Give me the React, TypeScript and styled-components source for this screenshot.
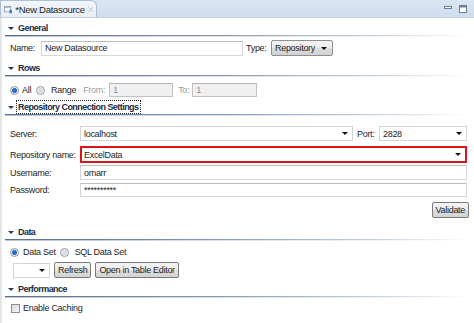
import styled, { createGlobalStyle } from 'styled-components'

const GlobalStyle = createGlobalStyle`
    body {
        margin: 0;
        font-family: 'Liberation Sans', Arial, sans-serif;
        font-size: 9px;
        letter-spacing: -0.3px;
        color: #1e1e1e;
        background: #fff;
    }
`

export default function App() {
    return (
        <>
            <GlobalStyle />
            <Editor>
                <TabBar>
                    <Tab>
                        <svg width="14" height="13" viewBox="0 0 14 13">
                            <rect x="0.5" y="1.5" width="11" height="9" fill="#fff" stroke="#6b7b8c" />
                            <rect x="0.5" y="1.5" width="11" height="2" fill="#8fa6c0" />
                            <rect x="9" y="7" width="5" height="6" rx="1.5" fill="#3d7fd1" />
                        </svg>
                        <span>*New Datasource</span>
                        <svg width="9" height="9" viewBox="0 0 9 9">
                            <path d="M1 1 L8 8 M8 1 L1 8" stroke="#9aa3ad" strokeWidth="1.6" />
                            <path d="M1 1 L8 8 M8 1 L1 8" stroke="#fff" strokeWidth="0.5" />
                        </svg>
                    </Tab>
                    <WindowIcons>
                        <svg width="10" height="8" viewBox="0 0 10 8">
                            <rect x="1.5" y="2.5" width="7" height="2" fill="#fff" stroke="#6f7f91" />
                        </svg>
                        <svg width="10" height="9" viewBox="0 0 10 9">
                            <rect x="1.5" y="1.5" width="7" height="7" fill="#fff" stroke="#6f7f91" />
                            <rect x="1.5" y="1.5" width="7" height="2" fill="#6f7f91" />
                        </svg>
                    </WindowIcons>
                </TabBar>

                <Body>
                    <Section $top={3}>
                        <SectionHeader>
                            <Twistie />
                            <Title>General</Title>
                        </SectionHeader>
                        <Rule />
                        <SectionBody $pad={3}>
                            <Row>
                                <Label $w={31}>Name:</Label>
                                <TextBox $w={202}>New Datasource</TextBox>
                                <Label $w={24} $ml={3}>Type:</Label>
                                <DropButton>
                                    <span>Repository</span>
                                    <Arrow />
                                </DropButton>
                            </Row>
                        </SectionBody>
                    </Section>

                    <Section $top={5}>
                        <SectionHeader>
                            <Twistie />
                            <Title>Rows</Title>
                        </SectionHeader>
                        <Rule />
                        <SectionBody $pad={6}>
                            <Row>
                                <Radio $checked />
                                <Label $ml={3}>All</Label>
                                <Radio $ml={5} />
                                <Label $ml={6}>Range</Label>
                                <Label $ml={7} $dim>From:</Label>
                                <TextBox $w={64} $disabled $ml={4} $h={14}>1</TextBox>
                                <Label $ml={5} $dim>To:</Label>
                                <TextBox $w={65} $disabled $ml={3} $h={14}>1</TextBox>
                            </Row>
                        </SectionBody>
                    </Section>

                    <Section $top={3}>
                        <SectionHeader>
                            <Twistie />
                            <Title $focused>Repository Connection Settings</Title>
                        </SectionHeader>
                        <Rule />
                        <SectionBody $pad={10}>
                            <Form>
                                <Row>
                                    <Label $w={70}>Server:</Label>
                                    <Combo $w={273}>
                                        <span>localhost</span>
                                        <Arrow />
                                    </Combo>
                                    <Label $ml={4} $w={22}>Port:</Label>
                                    <Combo $w={88}>
                                        <span>2828</span>
                                        <Arrow />
                                    </Combo>
                                </Row>
                                <Row $mt={5}>
                                    <Label $w={70}>Repository name:</Label>
                                    <Combo $w={387} $alert $h={17}>
                                        <span>ExcelData</span>
                                        <Arrow />
                                    </Combo>
                                </Row>
                                <Row $mt={2}>
                                    <Label $w={70}>Username:</Label>
                                    <TextBox $w={387}>omarr</TextBox>
                                </Row>
                                <Row $mt={3}>
                                    <Label $w={70}>Password:</Label>
                                    <TextBox $w={387} $h={14}>**********</TextBox>
                                </Row>
                                <ButtonRow>
                                    <Button>Validate</Button>
                                </ButtonRow>
                            </Form>
                        </SectionBody>
                    </Section>

                    <Section $top={7}>
                        <SectionHeader>
                            <Twistie />
                            <Title>Data</Title>
                        </SectionHeader>
                        <Rule />
                        <SectionBody $pad={5}>
                            <Row $h={12}>
                                <Radio $checked />
                                <Label $ml={4}>Data Set</Label>
                                <Radio $ml={4} />
                                <Label $ml={6}>SQL Data Set</Label>
                            </Row>
                            <Row $mt={4} $indent={3}>
                                <Combo $w={37}>
                                    <span />
                                    <Arrow />
                                </Combo>
                                <Button $ml={4}>Refresh</Button>
                                <Button $ml={4}>Open in Table Editor</Button>
                            </Row>
                        </SectionBody>
                    </Section>

                    <Section $top={4}>
                        <SectionHeader>
                            <Twistie />
                            <Title>Performance</Title>
                        </SectionHeader>
                        <Rule />
                        <SectionBody $pad={4}>
                            <Row $h={12} $indent={1}>
                                <CheckBox />
                                <Label $ml={3}>Enable Caching</Label>
                            </Row>
                        </SectionBody>
                    </Section>
                </Body>
            </Editor>
        </>
    )
}

const Editor = styled.div`
    width: 474px;
    height: 323px;
    overflow: hidden;
    background: #fff;
    display: flex;
    flex-direction: column;
`

const TabBar = styled.div`
    height: 18px;
    flex-shrink: 0;
    display: flex;
    align-items: flex-end;
    justify-content: space-between;
    background: linear-gradient(#dbe6f4, #cfdcee);
    border-bottom: 1px solid #c3d0e2;
    box-sizing: border-box;
`

const Tab = styled.div`
    height: 17px;
    width: 97px;
    box-sizing: border-box;
    display: flex;
    align-items: center;
    gap: 3px;
    padding: 0 3px 0 3px;
    background: linear-gradient(#f4f7fb, #e6edf6);
    border: 1px solid #aebfd6;
    border-bottom: none;
    border-radius: 0 6px 0 0;
    font-size: 9.5px;

    span {
        flex: 1;
        white-space: nowrap;
    }
`

const WindowIcons = styled.div`
    display: flex;
    gap: 5px;
    align-self: center;
    padding-right: 6px;
`

const Body = styled.div`
    flex: 1;
    border-left: 2px solid #e3e7ec;
    padding: 0 4px 0 3px;
`

const Section = styled.section<{ $top: number }>`
    margin-top: ${p => p.$top}px;
`

const SectionHeader = styled.div`
    height: 14px;
    display: flex;
    align-items: center;
    padding-left: 3px;
`

const Twistie = styled.span`
    width: 0;
    height: 0;
    border-left: 3px solid transparent;
    border-right: 3px solid transparent;
    border-top: 3px solid #263c58;
    margin-right: 3px;
`

const Title = styled.span<{ $focused?: boolean }>`
    font-weight: bold;
    letter-spacing: -0.55px;
    color: #1b2b40;
    padding: 1px 1px;
    outline: ${p => (p.$focused ? '1px dotted #222' : 'none')};
`

const Rule = styled.div`
    height: 2px;
    background:
        linear-gradient(to right, #56708f 0%, #8499b3 45%, #c7d2de 80%, rgba(255, 255, 255, 0) 100%) top / 100% 1px no-repeat,
        linear-gradient(to right, #b9c6d6 0%, #e3e9f0 60%, rgba(255, 255, 255, 0) 100%) bottom / 100% 1px no-repeat;
`

const SectionBody = styled.div<{ $pad: number }>`
    padding: ${p => p.$pad}px 0 0 5px;
`

const Form = styled.div`
    display: flex;
    flex-direction: column;
`

const Row = styled.div<{ $mt?: number; $h?: number; $indent?: number }>`
    display: flex;
    align-items: center;
    margin-top: ${p => p.$mt ?? 0}px;
    min-height: ${p => p.$h ?? 14}px;
    padding-left: ${p => p.$indent ?? 0}px;
`

const Label = styled.span<{ $w?: number; $ml?: number; $dim?: boolean }>`
    width: ${p => (p.$w ? `${p.$w}px` : 'auto')};
    margin-left: ${p => p.$ml ?? 0}px;
    color: ${p => (p.$dim ? '#9a9a9a' : '#1e1e1e')};
    white-space: nowrap;
    flex-shrink: 0;
`

const TextBox = styled.div<{ $w: number; $h?: number; $ml?: number; $disabled?: boolean }>`
    width: ${p => p.$w}px;
    height: ${p => p.$h ?? 15}px;
    margin-left: ${p => p.$ml ?? 0}px;
    box-sizing: border-box;
    border: 1px solid ${p => (p.$disabled ? '#c2c2c2' : '#d4d7db')};
    border-top-color: ${p => (p.$disabled ? '#b5b5b5' : '#b9bec5')};
    background: ${p => (p.$disabled ? '#f0f0f0' : '#fff')};
    color: ${p => (p.$disabled ? '#8c8c8c' : '#1e1e1e')};
    display: flex;
    align-items: center;
    padding: 0 3px;
    flex-shrink: 0;
`

const Combo = styled.div<{ $w: number; $h?: number; $alert?: boolean }>`
    width: ${p => p.$w}px;
    height: ${p => p.$h ?? 15}px;
    box-sizing: border-box;
    border: ${p => (p.$alert ? '2px solid #d9141b' : '1px solid #d2d5d9')};
    background: #fff;
    display: flex;
    align-items: center;
    justify-content: space-between;
    padding: 0 4px 0 ${p => (p.$alert ? 2 : 3)}px;
    flex-shrink: 0;
`

const Arrow = styled.span`
    width: 0;
    height: 0;
    border-left: 3px solid transparent;
    border-right: 3px solid transparent;
    border-top: 3px solid #111;
`

const DropButton = styled.div`
    width: 62px;
    height: 16px;
    box-sizing: border-box;
    margin-left: 1px;
    border: 1px solid #8e8f8f;
    border-radius: 2px;
    background: linear-gradient(#f3f3f3 0%, #ebebeb 50%, #dddddd 51%, #d2d2d2 100%);
    display: flex;
    align-items: center;
    justify-content: space-between;
    padding: 0 5px 0 3px;
`

const ButtonRow = styled.div`
    display: flex;
    justify-content: flex-end;
    margin-top: 5px;
    padding-right: 1px;
`

const Button = styled.button<{ $ml?: number }>`
    height: 16px;
    margin-left: ${p => p.$ml ?? 0}px;
    padding: 0 3px;
    border: 1px solid #7a7a7a;
    border-radius: 2px;
    background: linear-gradient(#f4f4f4 0%, #ececec 50%, #dedede 51%, #d3d3d3 100%);
    font-family: inherit;
    font-size: 9px;
    letter-spacing: -0.3px;
    color: #1e1e1e;
    line-height: 1;
    flex-shrink: 0;
`

const Radio = styled.span<{ $checked?: boolean; $ml?: number }>`
    width: 9px;
    height: 9px;
    margin-left: ${p => p.$ml ?? 0}px;
    box-sizing: border-box;
    border-radius: 50%;
    border: 1px solid #8f9aa6;
    flex-shrink: 0;
    background: ${p =>
        p.$checked
            ? 'radial-gradient(circle, #2f6fc2 0 2.2px, #e9eef4 2.6px)'
            : 'radial-gradient(circle, #d9dde2 0 2px, #eef0f2 3px)'};
`

const CheckBox = styled.span`
    width: 9px;
    height: 9px;
    box-sizing: border-box;
    border: 1px solid #8e8f8f;
    background: linear-gradient(135deg, #d8dadd, #f7f7f7);
    flex-shrink: 0;
`
